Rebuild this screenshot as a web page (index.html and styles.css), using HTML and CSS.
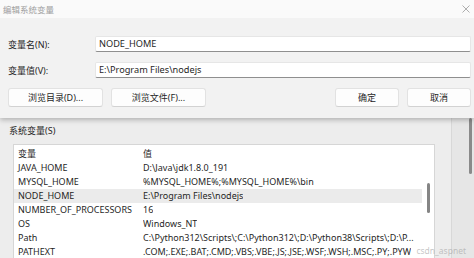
FILE: index.html
```html
<!DOCTYPE html>
<html lang="zh-CN">
<head>
    <meta charset="UTF-8">
    <title>编辑系统变量</title>
    <link rel="stylesheet" href="styles.css">
</head>
<body>

    <div class="dialog">
        <div class="titleBar">
            <span class="titleText">编辑系统变量</span>
            <span class="closeBtn">
                <svg width="8" height="8" viewBox="0 0 8 8"><path d="M0.5 0.5 L7.5 7.5 M7.5 0.5 L0.5 7.5" stroke="#9a9a9a" stroke-width="0.8" fill="none"/></svg>
            </span>
        </div>
        <div class="dialogBody">
            <div class="fieldRow">
                <label class="fieldLabel">变量名(N):</label>
                <div class="fieldInput">NODE_HOME</div>
            </div>
            <div class="fieldRow">
                <label class="fieldLabel">变量值(V):</label>
                <div class="fieldInput">E:\Program Files\nodejs</div>
            </div>
            <div class="buttonRow">
                <button class="btn btnBrowse">浏览目录(D)...</button>
                <button class="btn btnBrowse">浏览文件(F)...</button>
                <span class="spacer"></span>
                <button class="btn btnAction">确定</button>
                <button class="btn btnAction">取消</button>
            </div>
        </div>
    </div>

    <div class="backWindow">
        <div class="backMain">
            <div class="groupTitle">系统变量(S)</div>
            <div class="varList">
                <div class="varListInner">
                    <div class="varRow varHeader"><span class="colName">变量</span><span class="colValue">值</span></div>
                    <div class="varRow"><span class="colName">JAVA_HOME</span><span class="colValue">D:\Java\jdk1.8.0_191</span></div>
                    <div class="varRow"><span class="colName">MYSQL_HOME</span><span class="colValue">%MYSQL_HOME%;%MYSQL_HOME%\bin</span></div>
                    <div class="varRow selected"><span class="colName">NODE_HOME</span><span class="colValue">E:\Program Files\nodejs</span></div>
                    <div class="varRow"><span class="colName">NUMBER_OF_PROCESSORS</span><span class="colValue">16</span></div>
                    <div class="varRow"><span class="colName">OS</span><span class="colValue">Windows_NT</span></div>
                    <div class="varRow"><span class="colName">Path</span><span class="colValue">C:\Python312\Scripts\;C:\Python312\;D:\Python38\Scripts\;D:\P...</span></div>
                    <div class="varRow"><span class="colName">PATHEXT</span><span class="colValue">.COM;.EXE;.BAT;.CMD;.VBS;.VBE;.JS;.JSE;.WSF;.WSH;.MSC;.PY;.PYW</span></div>
                </div>
                <div class="listScroll"><div class="listThumb"></div></div>
            </div>
        </div>
        <div class="backSide">
            <div class="sideScroll"><div class="sideThumb"></div></div>
        </div>
        <span class="watermark">csdn_aspnet</span>
    </div>

</body>
</html>
```

FILE: styles.css
```css
body {
    font-family: 'Noto Sans', 'Noto Sans CJK SC', sans-serif;
    margin: 0;
    padding: 0;
    width: 474px;
    height: 258px;
    overflow: hidden;
    background-color: #ebebeb;
    color: #1f1f1f;
    position: relative;
}

.dialog {
    position: relative;
    z-index: 2;
    box-shadow: 0 2px 5px rgba(0, 0, 0, 0.25);
}

.titleBar {
    height: 18px;
    background-color: #fafafa;
    display: flex;
    align-items: center;
    justify-content: space-between;
    padding: 0 3px;
}

.titleText {
    font-size: 8.5px;
    color: #a0a0a0;
}

.closeBtn {
    display: flex;
    padding-right: 1px;
}

.dialogBody {
    height: 100px;
    box-sizing: border-box;
    background-color: #f2f2f2;
    padding: 18px 3px 0 8px;
}

.fieldRow {
    display: flex;
    align-items: center;
    height: 16px;
    margin-bottom: 10px;
}

.fieldLabel {
    width: 87px;
    font-size: 9px;
}

.fieldInput {
    flex: 1;
    height: 16px;
    box-sizing: border-box;
    background-color: #ffffff;
    border: 1px solid #e6e6e6;
    border-bottom-color: #8f8f8f;
    border-radius: 2px;
    padding: 0 3px;
    font-size: 9.2px;
    line-height: 14px;
}

.buttonRow {
    display: flex;
    gap: 8px;
    margin-top: 2px;
}

.spacer {
    flex: 1;
}

.btn {
    height: 19px;
    border: 1px solid #e2e2e2;
    border-bottom-color: #d2d2d2;
    border-radius: 3px;
    background-color: #fdfdfd;
    font-family: inherit;
    font-size: 9px;
    color: #1f1f1f;
    padding: 0;
}

.btnBrowse {
    width: 95px;
}

.btnAction {
    width: 64px;
}

.backWindow {
    display: flex;
    height: 140px;
    position: relative;
}

.backMain {
    width: 452px;
    padding: 7px 0 0 9px;
    box-sizing: border-box;
    border-right: 1px solid #d8d8d8;
    background-color: #ededed;
}

.groupTitle {
    font-size: 9px;
    line-height: 12px;
    margin-bottom: 7px;
}

.varList {
    display: flex;
    margin-left: 4px;
    width: 420px;
    height: 120px;
    background-color: #ffffff;
    border: 1px solid #d6d6d6;
}

.varListInner {
    flex: 1;
    padding-top: 1px;
}

.varRow {
    display: flex;
    height: 14px;
    line-height: 14px;
    font-size: 9px;
    padding-left: 4px;
    white-space: nowrap;
}

.varHeader {
    height: 15px;
    line-height: 15px;
}

.selected {
    background-color: #ebebeb;
}

.colName {
    width: 125px;
    flex-shrink: 0;
}

.colValue {
    overflow: hidden;
}

.listScroll {
    width: 12px;
    padding-top: 38px;
    display: flex;
    justify-content: center;
}

.listThumb {
    width: 3px;
    height: 30px;
    border-radius: 2px;
    background-color: #858585;
}

.backSide {
    flex: 1;
    background-color: #e6e6e6;
    display: flex;
    justify-content: flex-end;
}

.sideScroll {
    width: 8px;
    display: flex;
    justify-content: center;
}

.sideThumb {
    width: 3px;
    height: 56px;
    border-radius: 2px;
    background-color: #8a8a8a;
}

.watermark {
    position: absolute;
    right: 8px;
    bottom: 2px;
    font-size: 8.5px;
    color: rgba(160, 160, 160, 0.6);
}
```
